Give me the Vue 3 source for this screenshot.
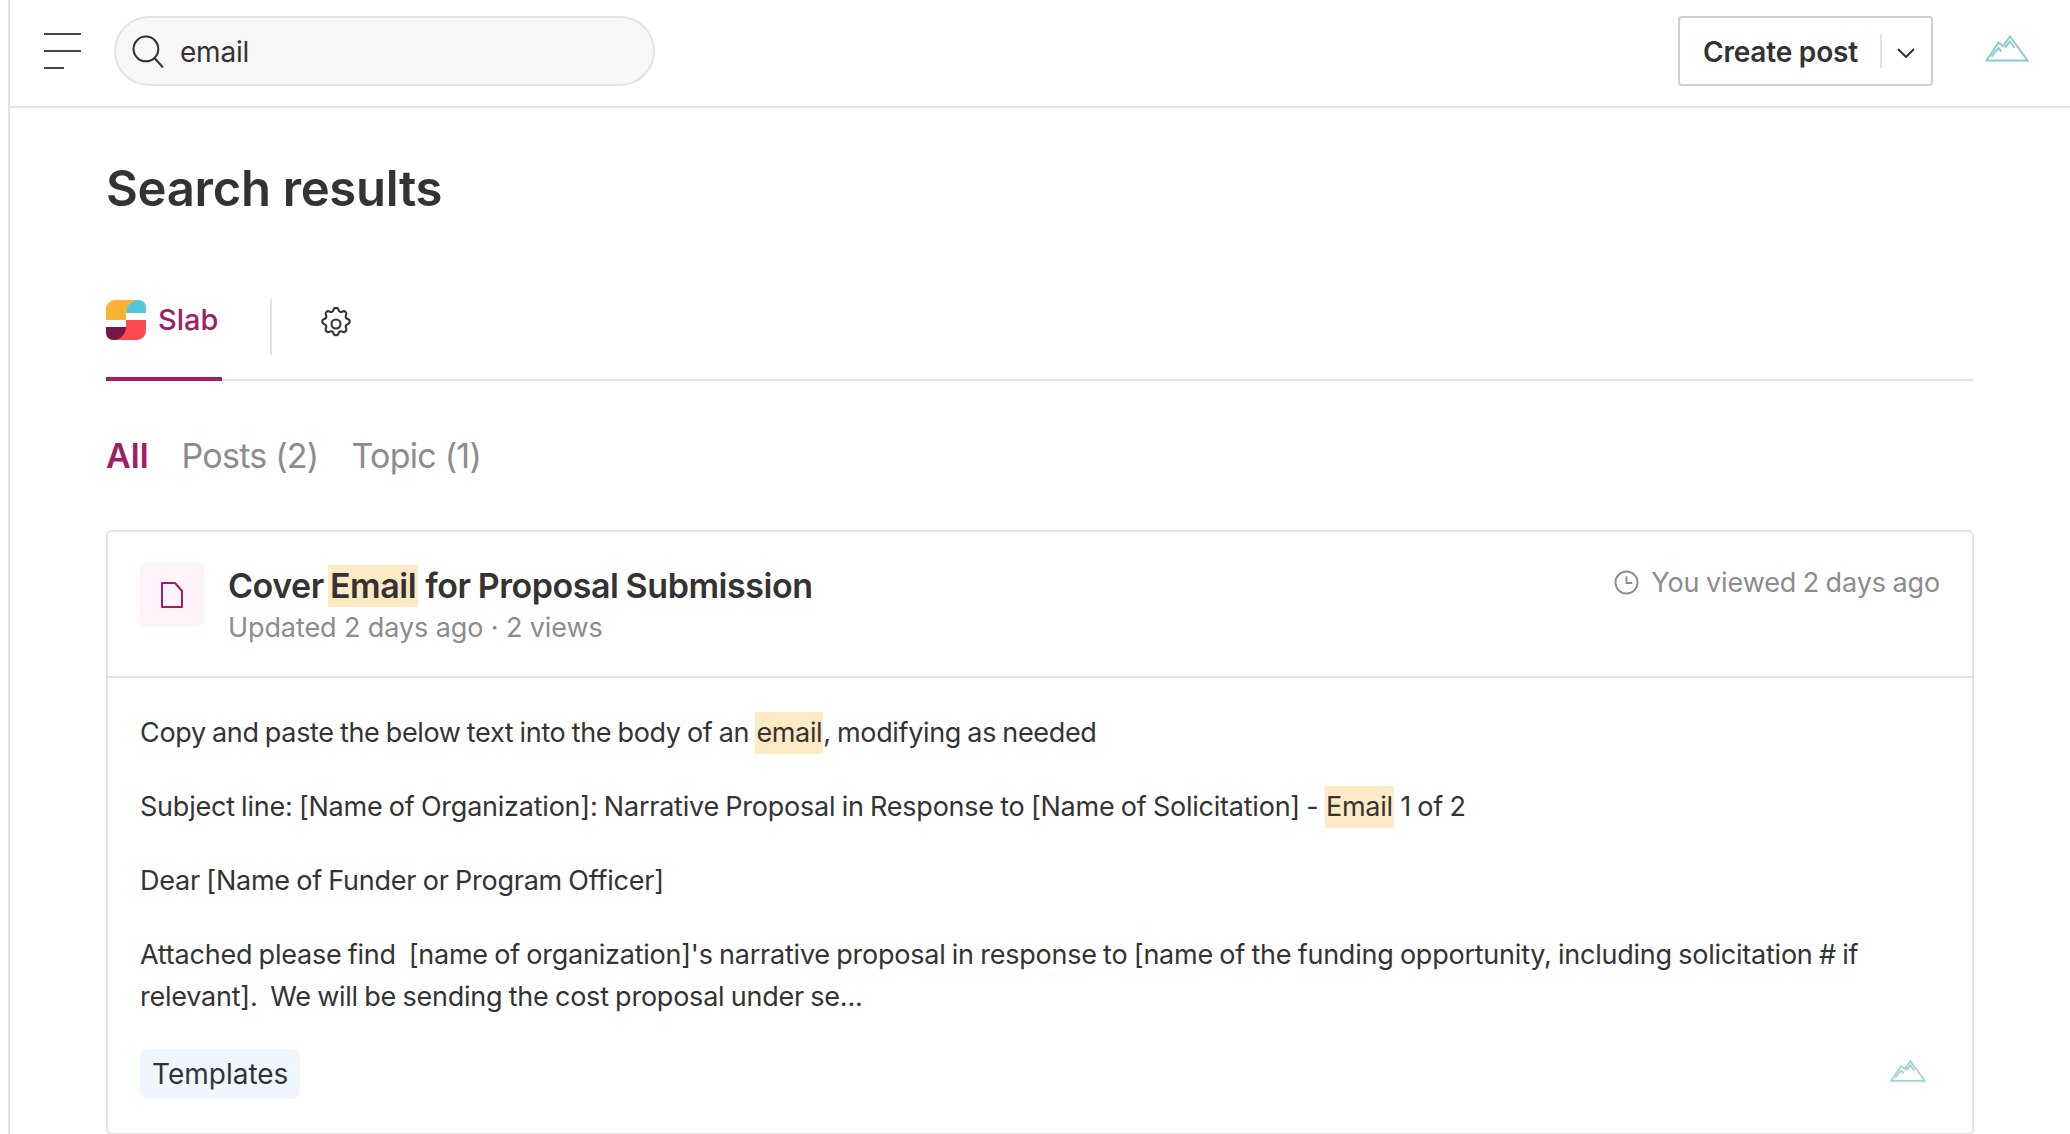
<template>
  <div class="page">
    <header class="topbar">
      <button class="menu-btn" aria-label="Menu">
        <span class="line"></span>
        <span class="line"></span>
        <span class="line short"></span>
      </button>
      <div class="search">
        <svg class="search-icon" viewBox="0 0 32 32" fill="none" stroke="#333" stroke-width="2">
          <circle cx="13.5" cy="13.5" r="12" />
          <path d="M22 22.5l8 9" />
        </svg>
        <span class="search-text">email</span>
      </div>
      <div class="create-btn">
        <span class="create-label">Create post</span>
        <span class="create-divider"></span>
        <svg class="chevron" viewBox="0 0 18 10" fill="none" stroke="#333" stroke-width="2">
          <path d="M1 1l8 8 8-8" />
        </svg>
      </div>
      <svg class="peak top-peak" viewBox="0 0 44 27" fill="none" stroke="#8ccbd6" stroke-width="2">
        <path d="M1.5 25.5H42.5L25 1.5 18 11 13.5 7.5z" />
        <path d="M6.5 21.5L13.5 13 16.5 16.5M20 12.5L25 6.5 29.5 13" />
      </svg>
    </header>

    <main class="content">
      <h1 class="page-title">Search results</h1>

      <div class="sources">
        <div class="source active">
          <svg class="slab-logo" viewBox="0 0 40 40">
            <path d="M0 9a9 9 0 0 1 9-9H33V13H20V20H0z" fill="#fdb236" />
            <path d="M20 13A13 13 0 0 1 33 0a7 7 0 0 1 7 7V13z" fill="#55c5dd" />
            <path d="M20 20H40V31a9 9 0 0 1-9 9H7V27H20z" fill="#fd4a4f" />
            <path d="M0 27H20A13 13 0 0 1 7 40a7 7 0 0 1-7-7z" fill="#751747" />
          </svg>
          <span class="source-name">Slab</span>
        </div>
        <span class="source-divider"></span>
        <svg class="gear" viewBox="0 0 24 24" fill="none" stroke="#333" stroke-width="1.4" stroke-linejoin="round">
          <circle cx="12" cy="12" r="3" />
          <path d="M10.3 2.6a1.75 1.75 0 0 1 3.4 0 1.75 1.75 0 0 0 2.6 1.1 1.75 1.75 0 0 1 2.4 2.4 1.75 1.75 0 0 0 1.1 2.6 1.75 1.75 0 0 1 0 3.4 1.75 1.75 0 0 0-1.1 2.6 1.75 1.75 0 0 1-2.4 2.4 1.75 1.75 0 0 0-2.6 1.1 1.75 1.75 0 0 1-3.4 0 1.75 1.75 0 0 0-2.6-1.1 1.75 1.75 0 0 1-2.4-2.4 1.75 1.75 0 0 0-1.1-2.6 1.75 1.75 0 0 1 0-3.4 1.75 1.75 0 0 0 1.1-2.6 1.75 1.75 0 0 1 2.4-2.4 1.75 1.75 0 0 0 2.6-1.1z" />
        </svg>
      </div>

      <nav class="filters">
        <a v-for="f in filters" :key="f.label" class="filter" :class="{ selected: f.selected }">{{ f.label }}</a>
      </nav>

      <article class="card">
        <div class="card-head">
          <div class="doc-icon">
            <svg viewBox="0 0 22 26" fill="none" stroke="#a01e66" stroke-width="2" stroke-linejoin="round">
              <path d="M1 1h13l7 8v16H1z" />
            </svg>
          </div>
          <div class="head-text">
            <h2 class="card-title">Cover <mark>Email</mark> for Proposal Submission</h2>
            <p class="card-meta">Updated 2 days ago · 2 views</p>
          </div>
          <div class="viewed">
            <svg class="clock" viewBox="0 0 24 24" fill="none" stroke="#8c8c8c" stroke-width="1.8">
              <circle cx="12" cy="12" r="10.6" />
              <path d="M12 6v6.5h5.5" />
            </svg>
            <span>You viewed 2 days ago</span>
          </div>
        </div>
        <div class="card-body">
          <p>Copy and paste the below text into the body of an <mark>email</mark>, modifying as needed</p>
          <p>Subject line: [Name of Organization]: Narrative Proposal in Response to [Name of Solicitation] - <mark>Email</mark> 1 of 2</p>
          <p>Dear [Name of Funder or Program Officer]</p>
          <p>Attached please find &nbsp;[name of organization]'s narrative proposal in response to [name of the funding opportunity, including solicitation # if relevant]. &nbsp;We will be sending the cost proposal under se...</p>
          <div class="card-foot">
            <span class="tag">Templates</span>
            <svg class="peak foot-peak" viewBox="0 0 44 27" fill="none" stroke="#9dd3dc" stroke-width="2.2">
              <path d="M1.5 25.5H42.5L25 1.5 18 11 13.5 7.5z" />
              <path d="M6.5 21.5L13.5 13 16.5 16.5M20 12.5L25 6.5 29.5 13" />
            </svg>
          </div>
        </div>
      </article>
    </main>
  </div>
</template>

<script setup>
const filters = [
  { label: 'All', selected: true },
  { label: 'Posts (2)', selected: false },
  { label: 'Topic (1)', selected: false },
];
</script>

<style>
html,
body {
  margin: 0;
  background: #fff;
}
</style>

<style scoped>
.page {
  box-sizing: border-box;
  height: 100vh;
  margin-left: 8px;
  border-left: 2px solid #e3e3e3;
  overflow: hidden;
  font-family: Inter, "Liberation Sans", sans-serif;
  color: #333;
}

.topbar {
  box-sizing: border-box;
  height: 108px;
  display: flex;
  align-items: center;
  border-bottom: 2px solid #e3e3e3;
  padding: 0 41px 4px 34px;
}

.menu-btn {
  display: flex;
  flex-direction: column;
  gap: 15px;
  width: 37px;
  padding: 0;
  background: none;
  border: none;
}

.line {
  display: block;
  height: 2px;
  width: 37px;
  background: #444;
}

.line.short {
  width: 20px;
}

.search {
  box-sizing: border-box;
  width: 541px;
  height: 70px;
  margin-left: 33px;
  display: flex;
  align-items: center;
  padding-left: 16px;
  background: #f7f7f7;
  border: 2px solid #e3e3e3;
  border-radius: 35px;
}

.search-icon {
  width: 33px;
  height: 33px;
}

.search-text {
  margin-left: 15px;
  margin-top: 2px;
  font-size: 28px;
  letter-spacing: -0.2px;
}

.create-btn {
  box-sizing: border-box;
  width: 255px;
  height: 70px;
  margin-left: auto;
  display: flex;
  align-items: center;
  padding-left: 23px;
  border: 2px solid #cfcfcf;
  border-radius: 4px;
}

.create-label {
  width: 155px;
  margin-top: 2px;
  font-size: 28px;
  font-weight: 600;
  white-space: nowrap;
  letter-spacing: -0.2px;
}

.create-divider {
  width: 2px;
  height: 34px;
  margin-left: 22px;
  background: #e3e3e3;
}

.chevron {
  width: 18px;
  height: 10px;
  margin-left: 15px;
  margin-top: 3px;
}

.peak {
  flex: none;
}

.top-peak {
  width: 44px;
  height: 27px;
  margin-left: 52px;
  margin-top: -6px;
}

.content {
  padding: 0 96px;
}

.page-title {
  margin: 52px 0 0;
  font-size: 49px;
  line-height: 58px;
  font-weight: 600;
  letter-spacing: -0.3px;
}

.sources {
  display: flex;
  align-items: flex-start;
  height: 108px;
  margin-top: 55px;
  border-bottom: 2px solid #e3e3e3;
  box-sizing: border-box;
}

.source {
  box-sizing: border-box;
  width: 116px;
  height: 108px;
  padding-top: 27px;
  display: flex;
  align-items: flex-start;
  gap: 12px;
  font-size: 29px;
  line-height: 38px;
  font-weight: 500;
  color: #a01e66;
}

.source-name {
  margin-top: 1px;
}

.source.active {
  border-bottom: 4px solid #a01e66;
}

.slab-logo {
  width: 40px;
  height: 40px;
}

.source-divider {
  width: 2px;
  height: 56px;
  margin-top: 26px;
  margin-left: 48px;
  background: #e3e3e3;
}

.gear {
  width: 36px;
  height: 36px;
  margin-top: 33px;
  margin-left: 46px;
}

.filters {
  display: flex;
  gap: 33px;
  margin-top: 53px;
  font-size: 34px;
  line-height: 44px;
  color: #8c8c8c;
  letter-spacing: -0.75px;
}

.filter.selected {
  font-weight: 600;
  color: #a01e66;
  letter-spacing: 0;
}

.card {
  margin-top: 52px;
  border: 2px solid #e3e3e3;
  border-radius: 6px;
}

.card-head {
  box-sizing: border-box;
  height: 146px;
  display: flex;
  align-items: flex-start;
  padding: 31px 32px 0;
  border-bottom: 2px solid #e3e3e3;
}

.doc-icon {
  flex: none;
  width: 64px;
  height: 64px;
  display: flex;
  align-items: center;
  justify-content: center;
  background: #fdf3f9;
  border-radius: 6px;
}

.doc-icon svg {
  width: 22px;
  height: 26px;
}

.head-text {
  margin-left: 24px;
  margin-top: 2px;
}

.card-title {
  margin: 0;
  font-size: 34px;
  line-height: 42px;
  font-weight: 600;
  letter-spacing: -0.45px;
  word-spacing: -1px;
}

.card-title mark {
  margin-left: -3px;
  padding: 0 2px;
}

.card-meta {
  margin: 0;
  font-size: 27px;
  line-height: 42px;
  letter-spacing: -0.1px;
  color: #8c8c8c;
}

.viewed {
  margin-left: auto;
  display: flex;
  align-items: center;
  gap: 12px;
  height: 39px;
  font-size: 27px;
  letter-spacing: -0.1px;
  word-spacing: -1px;
  color: #8c8c8c;
}

.clock {
  width: 25px;
  height: 25px;
}

mark {
  display: inline-block;
  background: #feeac4;
  color: inherit;
}

.card-body {
  padding: 34px 32px 34px;
  font-size: 27px;
  line-height: 42px;
  letter-spacing: -0.23px;
  word-spacing: -1px;
}

.card-body mark {
  padding: 0 1px;
}

.card-body p {
  margin: 0 0 32px;
}

.card-body p:first-child {
  letter-spacing: -0.34px;
}

.card-foot {
  display: flex;
  align-items: flex-start;
  justify-content: space-between;
  margin-top: -1px;
}

.tag {
  padding: 4px 12px;
  background: #f0f6ff;
  border-radius: 8px;
  font-size: 28px;
  letter-spacing: 0;
  word-spacing: 0;
}

.foot-peak {
  width: 36px;
  height: 22px;
  margin-top: 11px;
  margin-right: 14px;
}
</style>
